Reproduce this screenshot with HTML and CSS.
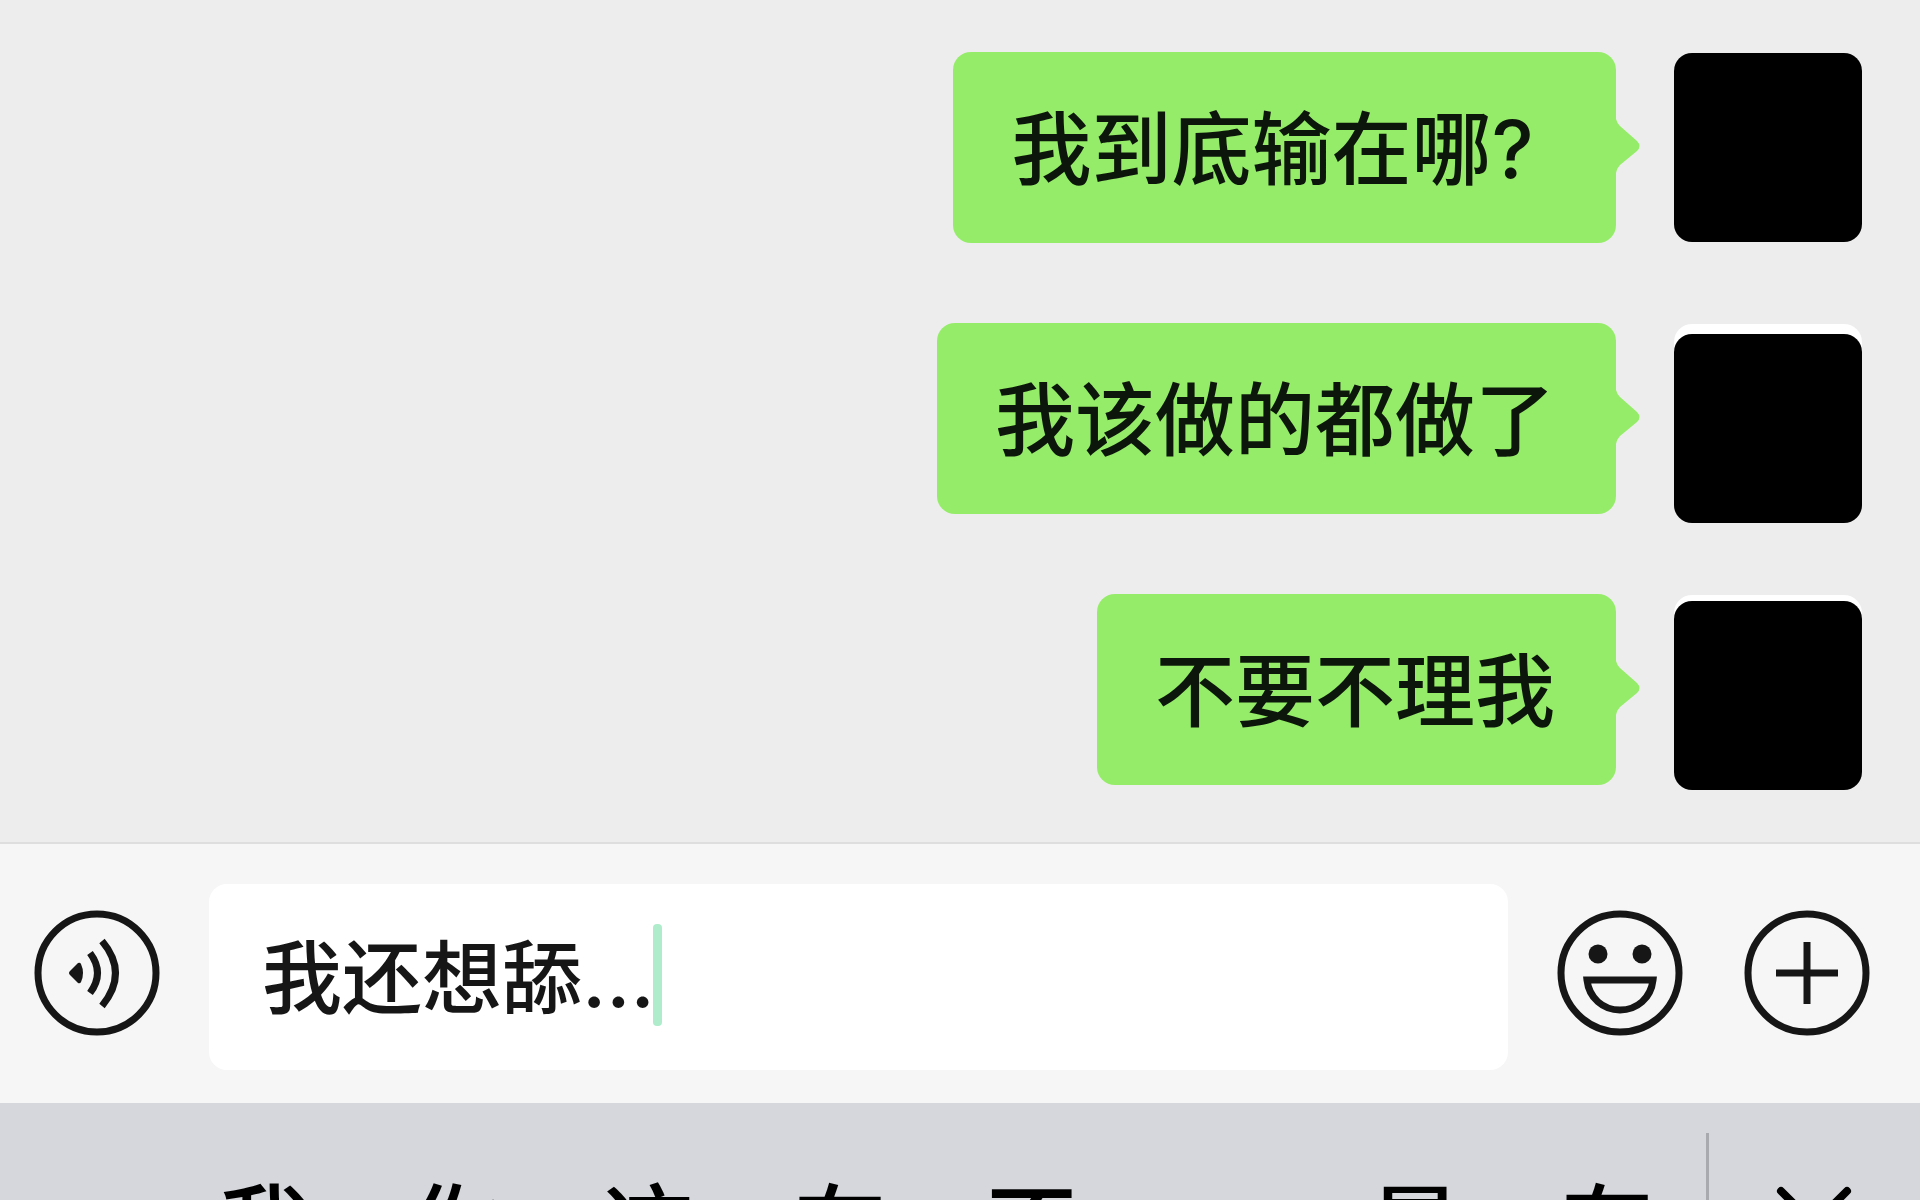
FILE: index.html
```html
<!DOCTYPE html>
<html lang="zh-CN">
<head>
<meta charset="utf-8">
<meta name="viewport" content="width=device-width, initial-scale=1">
<title>聊天</title>
<link rel="stylesheet" href="styles.css">
</head>
<body>
<main class="chat">
  <div class="message">
    <p class="bubble">我到底输在哪?&nbsp;</p>
    <div class="avatar"><div class="avatar-cover"></div></div>
  </div>
  <div class="message">
    <p class="bubble">我该做的都做了</p>
    <div class="avatar avatar-low"><div class="avatar-cover"></div></div>
  </div>
  <div class="message">
    <p class="bubble">不要不理我</p>
    <div class="avatar avatar-mid"><div class="avatar-cover"></div></div>
  </div>
</main>
<form class="composer">
  <button class="icon-button" type="button" aria-label="语音">
    <svg viewBox="0 0 126 126" fill="none" stroke="#161616" stroke-width="7">
      <circle cx="63" cy="63" r="59"/>
      <path d="M36 61 44 53Q46 52 47 54Q51 63 47 72Q46 74 44 73L36 65Q34 63 36 61Z" fill="#161616" stroke="none"/>
      <path d="M56 43Q71 63 56 83M68 31Q95 63 68 96"/>
    </svg>
  </button>
  <label class="field">
    <input class="field-input" type="text" value="我还想舔..." aria-label="输入消息">
    <span class="caret"></span>
  </label>
  <div class="actions">
    <button class="icon-button" type="button" aria-label="表情">
      <svg viewBox="0 0 126 126" fill="none" stroke="#161616" stroke-width="7">
        <circle cx="63" cy="63" r="59"/>
        <circle cx="41" cy="44" r="9.500" fill="#161616" stroke="none"/>
        <circle cx="85" cy="44" r="9.500" fill="#161616" stroke="none"/>
        <path d="M30 70H96C94 88 80 100 63 100S32 88 30 70Z"/>
      </svg>
    </button>
    <button class="icon-button" type="button" aria-label="更多">
      <svg viewBox="0 0 126 126" fill="none" stroke="#161616" stroke-width="7">
        <circle cx="63" cy="63" r="59"/>
        <path d="M32 63H94M63 32V94"/>
      </svg>
    </button>
  </div>
</form>
<section class="keyboard">
  <div class="candidates">
    <button class="candidate" type="button">我</button>
    <button class="candidate" type="button">你</button>
    <button class="candidate" type="button">这</button>
    <button class="candidate" type="button">在</button>
    <button class="candidate" type="button">不</button>
    <button class="candidate" type="button">一</button>
    <button class="candidate" type="button">是</button>
    <button class="candidate" type="button">有</button>
  </div>
  <button class="collapse" type="button" aria-label="收起">
    <svg viewBox="0 0 76 44" fill="none" stroke="#000" stroke-width="8" stroke-linecap="round" stroke-linejoin="round">
      <path d="M5 5 38 38 71 5"/>
    </svg>
  </button>
</section>
</body>
</html>
```
FILE: styles.css
```css
* {
  box-sizing: border-box;
}

body {
  margin: 0;
  height: 100vh;
  overflow: hidden;
  display: flex;
  flex-direction: column;
  background: #ededed;
  color: #141414;
  font-family: Inter, "Noto Sans CJK SC", sans-serif;
  font-weight: 500;
}

button {
  padding: 0;
  border: 0;
  background: none;
  color: inherit;
  font: inherit;
}

svg {
  display: block;
  width: 100%;
}

.chat {
  display: flex;
  flex-direction: column;
  gap: 80px;
  padding: 52px 58px 57px;
}

.message {
  display: flex;
  justify-content: flex-end;
  gap: 58px;
  height: 191px;
}

.bubble {
  position: relative;
  margin: 0;
  padding: 0 61px 0 58px;
  border-radius: 18px;
  background: #95ec69;
  color: #0c160a;
  font-size: 80px;
  line-height: 194px;
  white-space: nowrap;
}

.bubble::after {
  content: "";
  position: absolute;
  top: 67px;
  left: 100%;
  width: 24px;
  height: 56px;
  background: #95ec69;
  clip-path: path("M0 0Q1 4 4 7L21 22Q26 27 21 32L4 46Q1 49 0 54Z");
}

.avatar {
  width: 188px;
  height: 189px;
  margin-top: 1px;
  border-radius: 18px;
}

.avatar-cover {
  height: 189px;
  border-radius: 18px;
  background: #000;
}

.avatar-low,
.avatar-mid {
  background: #fff;
}

.avatar-low {
  padding-top: 10px;
}

.avatar-mid {
  padding-top: 6px;
}

.composer {
  display: flex;
  align-items: flex-start;
  gap: 49px;
  padding: 40px 50px 33px 34px;
  border-top: 2px solid #dedede;
  background: #f6f6f6;
}

.icon-button {
  flex: none;
  width: 126px;
  margin-top: 26px;
}

.actions {
  display: flex;
  gap: 61px;
}

.field {
  flex: 1;
  min-width: 0;
  display: flex;
  align-items: center;
  height: 186px;
  padding: 0 0 4px 53px;
  border-radius: 18px;
  background: #fff;
}

.field-input {
  width: 391px;
  height: 112px;
  padding: 0 0 6px;
  border: 0;
  outline: 0;
  background: none;
  color: #161616;
  font: inherit;
  font-size: 80px;
}

.caret {
  width: 9px;
  height: 102px;
  border-radius: 4px;
  background: #aeeccb;
}

.keyboard {
  flex: 1;
  min-height: 0;
  overflow: hidden;
  display: flex;
  align-items: flex-start;
  padding-top: 30px;
  background: #d6d7dc;
  color: #000;
}

.candidates {
  flex: 1;
  display: grid;
  grid-template-columns: repeat(8, 1fr);
  padding: 0 3px 0 169px;
}

.candidate {
  height: 190px;
  font-size: 92px;
  line-height: 190px;
}

.collapse {
  display: flex;
  align-items: flex-start;
  width: 214px;
  height: 190px;
  padding: 53px 68px 0 67px;
  border-left: 3px solid #a9aaaf;
}
```
